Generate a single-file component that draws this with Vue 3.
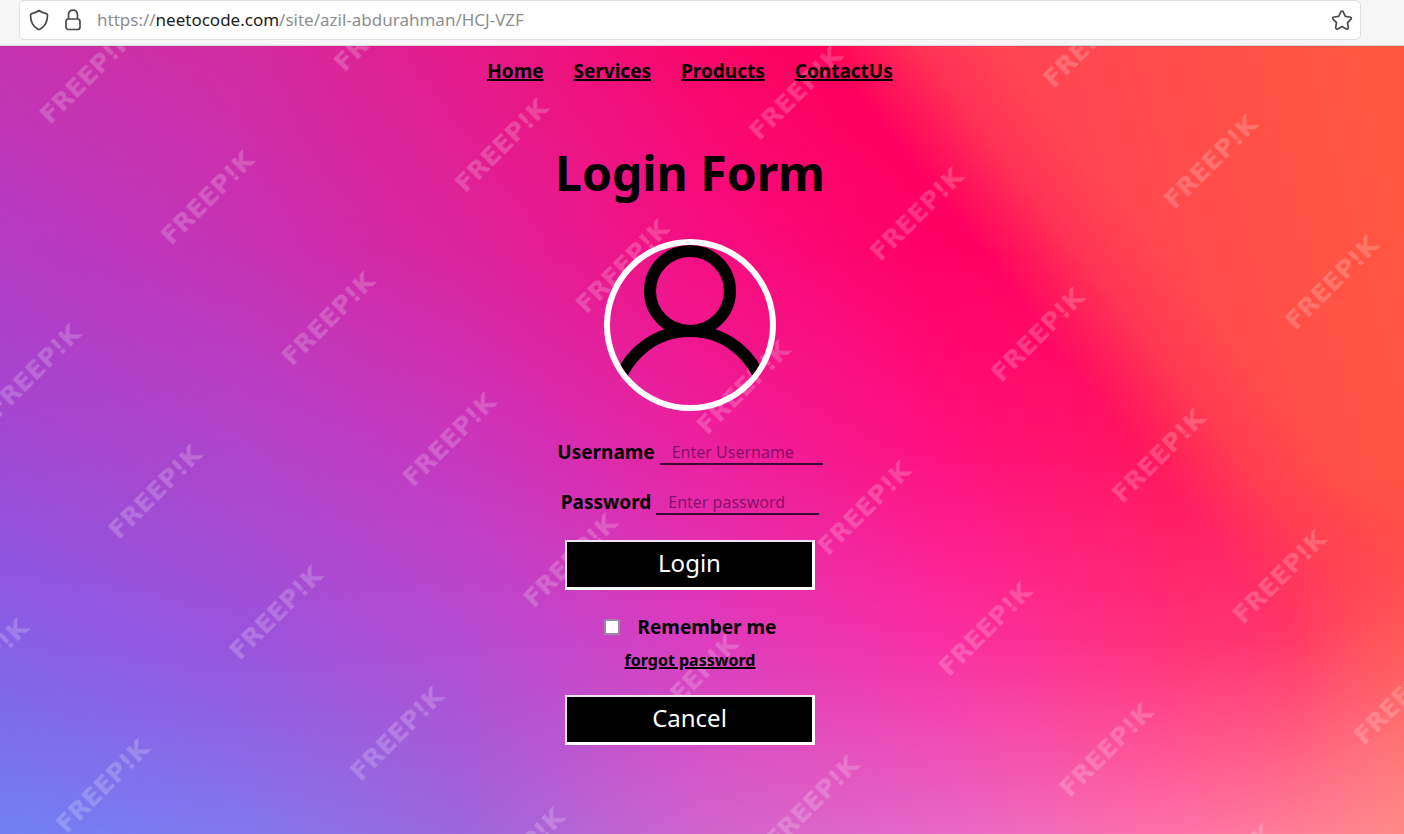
<script setup>
import { ref } from 'vue'

const links = ['Home', 'Services', 'Products', 'ContactUs']
const username = ref('')
const password = ref('')
const remember = ref(false)
</script>

<template>
  <div class="window">
    <header class="toolbar">
      <div class="address">
        <button class="tool" type="button" aria-label="Tracking protection">
          <svg width="20" height="22" viewBox="0 0 20 22">
            <path d="M10 1.5 C12.3 3.3 15 4.2 17.3 4.6 C18.1 4.8 18.5 5.3 18.5 6.1 C18.5 12.3 16.3 17.4 11.3 20.1 C10.3 20.7 9.7 20.7 8.7 20.1 C3.7 17.4 1.5 12.3 1.5 6.1 C1.5 5.3 1.9 4.8 2.7 4.6 C5 4.2 7.7 3.3 10 1.5 Z" />
          </svg>
        </button>
        <button class="tool" type="button" aria-label="Connection security">
          <svg width="16" height="22" viewBox="0 0 16 22">
            <rect x="1" y="10" width="14" height="10.5" rx="2.5" />
            <path d="M3.5 10 V6 C3.5 3 5.2 1.2 8 1.2 C10.8 1.2 12.5 3 12.5 6 V10" />
          </svg>
        </button>
        <span class="url">https://<b>neetocode.com</b>/site/azil-abdurahman/HCJ-VZF</span>
        <button class="tool" type="button" aria-label="Bookmark">
          <svg width="22" height="22" viewBox="0 0 22 22">
            <path d="M11 2 C11.6 2 12 2.4 12.3 3 L14.3 7.3 L19 8 C20.4 8.2 20.8 9.4 19.8 10.4 L16.5 13.7 L17.3 18.4 C17.5 19.8 16.5 20.5 15.3 19.9 L11 17.6 L6.7 19.9 C5.5 20.5 4.5 19.8 4.7 18.4 L5.5 13.7 L2.2 10.4 C1.2 9.4 1.6 8.2 3 8 L7.7 7.3 L9.7 3 C10 2.4 10.4 2 11 2 Z" />
          </svg>
        </button>
      </div>
    </header>

    <main class="page">
      <div class="backdrop" aria-hidden="true">
        <div class="band band-1"></div>
        <div class="band band-2"></div>
        <div class="band band-3"></div>
        <div class="band band-4"></div>
        <div class="band band-5"></div>
        <div class="band glow"></div>
        <svg class="stamps" width="100%" height="100%">
          <defs>
            <pattern id="stamp" width="245" height="171" patternUnits="userSpaceOnUse" patternTransform="translate(60 177) rotate(-45)">
              <text x="122" y="95" text-anchor="middle">FREEP!K</text>
            </pattern>
          </defs>
          <rect width="100%" height="100%" fill="url(#stamp)" />
        </svg>
      </div>

      <nav class="nav">
        <a v-for="link in links" :key="link" href="#">{{ link }}</a>
      </nav>

      <form class="form" @submit.prevent>
        <h1>Login Form</h1>
        <div class="avatar">
          <svg width="160" height="160" viewBox="0 0 160 160">
            <circle cx="80" cy="46" r="40" />
            <circle cx="80" cy="161" r="75" />
          </svg>
        </div>
        <div class="field">
          <label for="username">Username</label>
          <input id="username" v-model="username" type="text" placeholder="Enter Username" />
        </div>
        <div class="field">
          <label for="password">Password</label>
          <input id="password" v-model="password" type="password" placeholder="Enter password" />
        </div>
        <button class="action" type="submit">Login</button>
        <div class="remember">
          <input id="remember" v-model="remember" type="checkbox" />
          <label for="remember">Remember me</label>
        </div>
        <a class="forgot" href="#">forgot password</a>
        <button class="action" type="button">Cancel</button>
      </form>
    </main>
  </div>
</template>

<style>
body {
  margin: 0;
}
</style>

<style scoped>
.window {
  display: flex;
  flex-direction: column;
  min-height: 100vh;
  font-family: "Noto Sans", "Open Sans", sans-serif;
}

.toolbar {
  padding: 0 43px 5px 19px;
  border-bottom: 1px solid #dcd6dc;
  background: #f6f6f7;
}

.address {
  display: flex;
  align-items: center;
  gap: 16px;
  box-sizing: border-box;
  height: 40px;
  padding: 0 7px 0 9px;
  border: 1px solid #dedee0;
  border-radius: 5px;
  background: #fff;
}

.tool {
  display: flex;
  padding: 0;
  border: 0;
  background: none;
}

.tool svg {
  fill: none;
  stroke: #4a4a4e;
  stroke-width: 1.7;
  stroke-linejoin: round;
}

.url {
  flex: 1;
  color: #8e8e92;
  font-size: 17px;
  line-height: 24px;
}

.url b {
  color: #1c1c20;
  font-weight: 400;
}

.page {
  position: relative;
  flex: 1;
  padding: 0 24px 16px 0;
}

.backdrop,
.band,
.stamps {
  position: absolute;
  inset: 0;
}

.backdrop {
  overflow: hidden;
}

.band-1 {
  background: linear-gradient(90deg, #c633ae 0%, #d22da2 17%, #e51b8a 33%, #f9086a 50%, #ff005a 60%, #ff0058 100%);
}

.band-2 {
  background: linear-gradient(90deg, #b43cc4 0%, #c632b4 17%, #dc249c 33%, #f60e80 50%, #ff0064 67%, #ff0058 83%);
  mask-image: linear-gradient(180deg, transparent 0%, #000 25%);
}

.band-3 {
  background: linear-gradient(90deg, #a048d2 0%, #b044ca 17%, #c836bc 33%, #ec209e 50%, #ff107c 67%, #ff145c 83%);
  mask-image: linear-gradient(180deg, transparent 25%, #000 50%);
}

.band-4 {
  background: linear-gradient(90deg, #8660e6 0%, #9a54dc 17%, #b44cd2 33%, #dc3cbe 50%, #fa2ea2 67%, #ff3078 83%, #ff3868 92%, #ff6064 100%);
  mask-image: linear-gradient(180deg, transparent 50%, #000 75%);
}

.band-5 {
  background: linear-gradient(90deg, #7080f2 0%, #8078ec 17%, #9c66dc 33%, #d064cc 50%, #e668c8 67%, #ff70a8 83%, #ff8a88 100%);
  mask-image: linear-gradient(180deg, transparent 75%, #000 100%);
}

.glow {
  background: linear-gradient(75deg, #ff3c58 60%, #ff4652 78%, #ff583f 98%);
  mask-image: linear-gradient(52deg, transparent 71%, rgba(0, 0, 0, 0.75) 76%, #000 80%), linear-gradient(180deg, #000 55%, transparent 95%);
  mask-composite: intersect;
}

.stamps text {
  fill: rgba(255, 255, 255, 0.2);
  font-family: "DejaVu Sans", Inter, sans-serif;
  font-size: 25px;
  font-weight: 700;
}

.nav {
  position: relative;
  display: flex;
  justify-content: center;
  gap: 30px;
  padding-top: 11px;
  font-size: 19px;
  font-weight: 700;
  line-height: 28px;
}

.nav a,
.forgot {
  color: #000;
  text-decoration-thickness: 2px;
}

.form {
  position: relative;
  display: flex;
  flex-direction: column;
  align-items: center;
}

h1 {
  margin: 54px 0 32px;
  font-size: 48px;
  font-weight: 700;
  line-height: 68px;
}

.avatar {
  overflow: hidden;
  width: 160px;
  height: 160px;
  margin-bottom: 26px;
  border: 6px solid #fff;
  border-radius: 50%;
}

.avatar svg {
  display: block;
  fill: none;
  stroke: #000;
  stroke-width: 12;
}

.field {
  display: flex;
  align-items: flex-start;
  gap: 5px;
  height: 28px;
  margin-bottom: 22px;
}

.field label,
.remember label {
  font-size: 19px;
  font-weight: 700;
  line-height: 30px;
}

.field input {
  box-sizing: border-box;
  width: 163px;
  height: 28px;
  padding: 4px 12px 0;
  border: 0;
  border-bottom: 2px solid #3a0a35;
  outline: 0;
  background: transparent;
  color: #000;
  font: 16px/22px "Noto Sans", sans-serif;
}

.field input::placeholder {
  color: rgba(40, 0, 60, 0.54);
  opacity: 1;
}

.action {
  box-sizing: border-box;
  width: 250px;
  height: 50px;
  padding: 0 0 4px;
  border: solid;
  border-width: 2px 3px 3px 2px;
  border-color: #f1e4f2 #fff #fff #f1e4f2;
  background: #000;
  color: #fff;
  font: 24px/32px "Noto Sans", sans-serif;
}

.field + .action {
  margin-top: 3px;
}

.remember {
  display: flex;
  align-items: center;
  gap: 18px;
  margin-top: 22px;
}

.remember input {
  appearance: none;
  box-sizing: border-box;
  width: 16px;
  height: 16px;
  margin: 0;
  border: 2px solid #9a8aa2;
  border-radius: 2px;
  background: #fff;
}

.remember input:checked {
  background: #000;
}

.forgot {
  margin: 6px 0 23px;
  font-size: 16px;
  font-weight: 700;
  line-height: 24px;
}
</style>
